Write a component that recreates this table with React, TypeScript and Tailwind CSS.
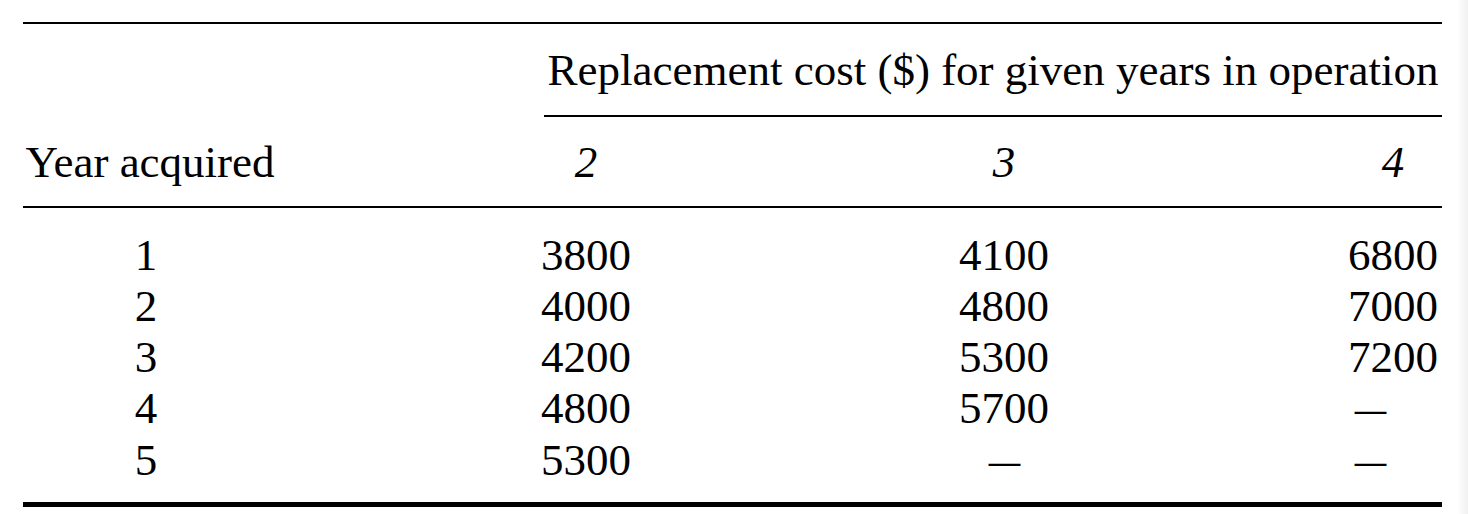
import React from "react";

const rows: [string, string, string, string][] = [
  ["1", "3800", "4100", "6800"],
  ["2", "4000", "4800", "7000"],
  ["3", "4200", "5300", "7200"],
  ["4", "4800", "5700", "—"],
  ["5", "5300", "—", "—"],
];

function Cell({ v, last }: { v: string; last?: boolean }) {
  if (v === "—") {
    return (
      <span className="inline-block w-[90px] text-center">
        <span className={`inline-block scale-x-[0.7] ${last ? "mr-[45px]" : ""}`}>—</span>
      </span>
    );
  }
  return <span className="inline-block w-[90px] text-center">{v}</span>;
}

export default function App() {
  return (
    <div className="flex min-h-[514px] w-full bg-white font-['Liberation_Serif',serif] text-black">
      <div className="flex-1 pl-[23px] pt-[22px]">
        <div className="w-[1419px] text-[45px] leading-[51.25px]">
          <div className="border-t-2 border-black" />
          <div className="flex">
            <div className="w-[521px]" />
            <div className="flex-1 border-b-2 border-black pt-[20.5px] pb-[19px] text-center">
              Replacement cost ($) for given years in operation
            </div>
          </div>
          <div className="grid grid-cols-[254px_354px_418px_393px] border-b-2 border-black pt-[20px] pb-[18px]">
            <div className="whitespace-nowrap text-center">Year acquired</div>
            <div className="text-right italic">
              <span className="inline-block w-[90px] text-center">2</span>
            </div>
            <div className="text-right italic">
              <span className="inline-block w-[90px] text-center">3</span>
            </div>
            <div className="pr-[4px] text-right italic">
              <span className="inline-block w-[90px] text-center">4</span>
            </div>
          </div>
          <div className="grid grid-cols-[254px_354px_418px_393px] border-b-[5px] border-black pt-[21.5px] pb-[16px]">
            {rows.map((r) => (
              <React.Fragment key={r[0]}>
                <div className="pr-[8px] text-center">{r[0]}</div>
                <div className="text-right">
                  <Cell v={r[1]} />
                </div>
                <div className="text-right">
                  <Cell v={r[2]} />
                </div>
                <div className="pr-[4px] text-right">
                  <Cell v={r[3]} last />
                </div>
              </React.Fragment>
            ))}
          </div>
        </div>
      </div>
      <div className="w-[11px] bg-linear-to-r from-white to-[#f1f1f1]" />
    </div>
  );
}
